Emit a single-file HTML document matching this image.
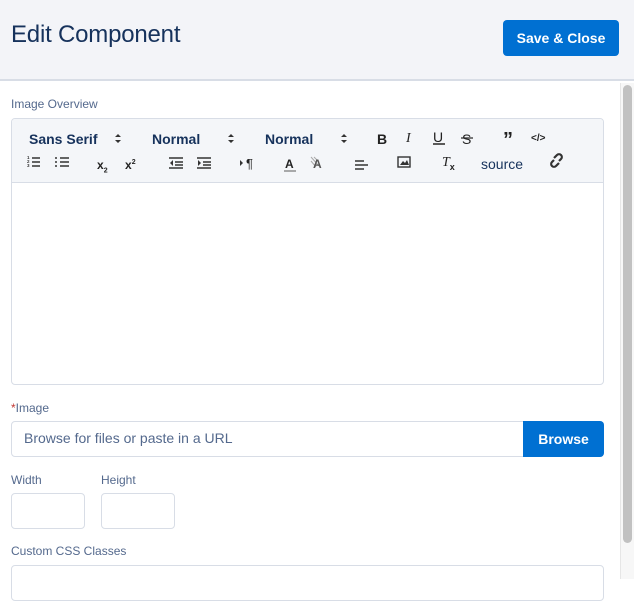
<!DOCTYPE html>
<html><head><meta charset="utf-8"><style>
*{margin:0;padding:0;box-sizing:border-box}
body{width:634px;height:579px;overflow:hidden;background:#fff;font-family:"Liberation Sans",sans-serif;position:relative}
.a{position:absolute}
.hdr{left:0;top:0;width:634px;height:81px;background:#f3f4f8;border-bottom:2px solid #d8dde6}
.lbl{font-size:12px;color:#54698d}
.t{font-size:14px;color:#16325c;font-weight:bold;line-height:16px}
.ic{color:#222;font-size:14px;line-height:16px}
.box{border:1px solid #d8dde6;border-radius:4px;background:#fff}
</style></head><body>
<div class="a hdr"></div>
<div class="a" style="left:11px;top:20px;font-size:24px;color:#16325c;line-height:30px;letter-spacing:-0.2px">Edit Component</div>
<div class="a" style="left:503px;top:20px;width:116px;height:36px;background:#0070d2;border-radius:4px;color:#fff;font-size:14px;text-align:center;line-height:36px;font-weight:bold">Save &amp; Close</div>
<div class="a" style="left:620px;top:83px;width:14px;height:496px;background:#f7f7f7;border-left:1px solid #e6e6e6"></div>
<div class="a" style="left:623px;top:85px;width:9px;height:458px;background:#c1c1c1;border-radius:5px"></div>

<div class="a lbl" style="left:11px;top:97px">Image Overview</div>
<div class="a box" style="left:11px;top:118px;width:593px;height:267px"></div>
<div class="a" style="left:12px;top:119px;width:591px;height:64px;background:#f4f6f9;border-bottom:1px solid #d8dde6;border-radius:4px 4px 0 0"></div>

<div class="a t" style="left:29px;top:131px">Sans Serif</div>
<div class="a t" style="left:152px;top:131px">Normal</div>
<div class="a t" style="left:265px;top:131px">Normal</div>
<svg class="a" style="left:0;top:0" width="634" height="200">
<g fill="#333"><path d="M115 137l3-3 3 3zM115 140l3 3 3-3z"/><path d="M228 137l3-3 3 3zM228 140l3 3 3-3z"/><path d="M341 137l3-3 3 3zM341 140l3 3 3-3z"/></g>
<g stroke="#333" stroke-width="1.6" fill="none">
<path d="M32 158h8M32 162h8M32 166h8"/>
<path d="M60 158h9M60 162h9M60 166h9"/><path d="M55 158h2M55 162h2M55 166h2"/>
<path d="M169 158h14M175 162h8M175 165h8M169 168h14"/><path d="M197 158h14M203 162h8M203 165h8M197 168h14"/>
<path d="M284 171h12" stroke="#888" stroke-width="1.4"/>
<path d="M355 161h9M355 165h13M355 169h9"/>
<rect x="398" y="157" width="12" height="10" stroke-width="1.4"/>
<path d="M433 144h12"/><path d="M461 138h12" stroke-width="1.3"/>
<path d="M554 158l3-3a2.5 2.5 0 014 4l-2 2M559 163l-3 3a2.5 2.5 0 01-4-4l2-2" stroke-width="2.2"/>
</g>
<g fill="#333" font-family="Liberation Sans" font-size="4.5" font-weight="bold"><text x="27" y="159">1</text><text x="27" y="163">2</text><text x="27" y="167">3</text></g>
<path d="M170 163l3-3v6z" fill="#333"/><path d="M201 163l-3-3v6z" fill="#333"/>
<path d="M240 160l3 3-3 3z" fill="#333"/>
<path d="M400 165l3-4 2 2 2-3 2 5z" fill="#333"/>
<path d="M311 157l8 9M311 161l5 6M314 157l5 5" stroke="#aaa" stroke-width="1"/>
</svg>
<div class="a ic" style="left:377px;top:131px;font-weight:bold">B</div>
<div class="a ic" style="left:406px;top:131px;font-style:italic;font-family:'Liberation Serif',serif">I</div>
<div class="a ic" style="left:433px;top:129px">U</div>
<div class="a ic" style="left:462px;top:131px">S</div>
<div class="a ic" style="left:503px;top:130px;font-weight:bold;font-size:20px;line-height:20px">&#8221;</div>
<div class="a ic" style="left:531px;top:131px;font-size:10px;font-weight:bold">&lt;/&gt;</div>

<div class="a ic" style="left:97px;top:157px;font-size:12px;font-weight:bold">x<sub style="font-size:7px">2</sub></div>
<div class="a ic" style="left:125px;top:155px;font-size:12px;font-weight:bold">x<sup style="font-size:7px">2</sup></div>
<div class="a ic" style="left:246px;top:156px;font-size:13px">&para;</div>
<div class="a ic" style="left:285px;top:156px;font-size:12px;font-weight:bold">A</div>
<div class="a ic" style="left:313px;top:156px;font-size:12px;font-weight:bold;color:#555">A</div>
<div class="a ic" style="left:442px;top:155px;font-style:italic;font-family:'Liberation Serif',serif">T<sub style="font-size:9px;font-style:normal;font-weight:bold;font-family:'Liberation Sans'">x</sub></div>
<div class="a" style="left:481px;top:156px;font-size:14px;color:#16325c">source</div>

<div class="a lbl" style="left:11px;top:401px"><span style="color:#c23934">*</span>Image</div>
<div class="a box" style="left:11px;top:421px;width:593px;height:36px"></div>
<div class="a" style="left:24px;top:430px;font-size:14px;color:#54698d">Browse for files or paste in a URL</div>
<div class="a" style="left:523px;top:421px;width:81px;height:36px;background:#0070d2;border-radius:0 4px 4px 0;color:#fff;font-size:14px;text-align:center;line-height:36px;font-weight:bold">Browse</div>
<div class="a lbl" style="left:11px;top:473px">Width</div>
<div class="a lbl" style="left:101px;top:473px">Height</div>
<div class="a box" style="left:11px;top:493px;width:74px;height:36px"></div>
<div class="a box" style="left:101px;top:493px;width:74px;height:36px"></div>
<div class="a lbl" style="left:11px;top:544px">Custom CSS Classes</div>
<div class="a box" style="left:11px;top:565px;width:593px;height:36px"></div>
</body></html>
